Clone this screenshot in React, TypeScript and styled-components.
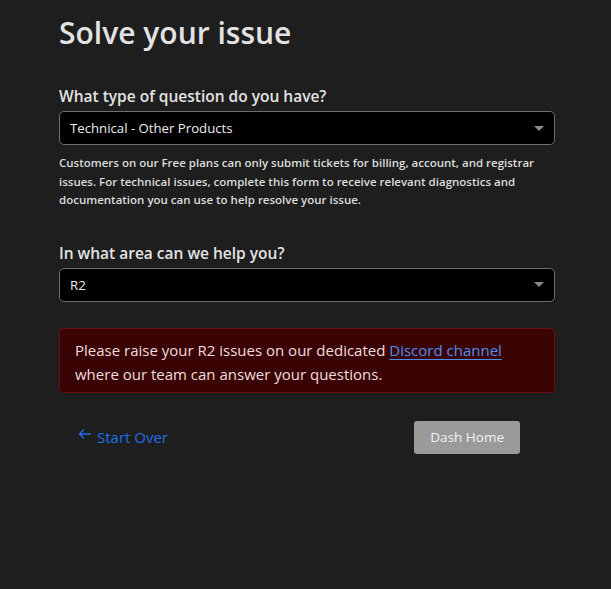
import styled, { createGlobalStyle } from 'styled-components';

const GlobalStyle = createGlobalStyle`
  html, body {
    margin: 0;
    padding: 0;
    background: #1e1e1e;
  }
  body {
    font-family: "Open Sans", "Noto Sans", sans-serif;
    color: #e6e6e6;
  }
`;

const Page = styled.div`
  width: 496px;
  padding: 13px 0 0 59px;
  display: flex;
  flex-direction: column;
`;

const Title = styled.h1`
  margin: 0 0 33px;
  font-size: 30px;
  font-weight: 600;
  line-height: 40px;
  color: #e3e3e3;
`;

const Field = styled.div<{ $gap?: number }>`
  display: flex;
  flex-direction: column;
  margin-bottom: ${p => p.$gap ?? 0}px;
`;

const Label = styled.label`
  font-size: 15.5px;
  font-weight: 600;
  line-height: 20px;
  margin-bottom: 5px;
  color: #e3e3e3;
`;

const SelectBox = styled.div`
  height: 34px;
  box-sizing: border-box;
  border: 1px solid #6e6e6e;
  border-radius: 5px;
  background: #000;
  display: flex;
  align-items: center;
  padding: 0 10px;
  font-size: 13.2px;
  color: #ededed;
`;

const Caret = styled.span`
  margin-left: auto;
  width: 0;
  height: 0;
  border-left: 5px solid transparent;
  border-right: 5px solid transparent;
  border-top: 5px solid #8a8a8a;
`;

const Help = styled.p`
  margin: 9px 0 0;
  font-size: 11.5px;
  font-weight: 600;
  line-height: 18.5px;
  color: #dcdcdc;
`;

const Alert = styled.div`
  box-sizing: border-box;
  border: 1px solid #6a1010;
  border-radius: 4px;
  background: #3b0404;
  padding: 9px 15px 6px;
  font-size: 15px;
  line-height: 24px;
  color: #f0dcdc;
`;

const Link = styled.a`
  color: #4d8ef2;
  text-decoration: underline;
  text-underline-offset: 3px;
`;

const Actions = styled.div`
  display: flex;
  align-items: center;
  justify-content: space-between;
  padding: 28px 35px 0 19px;
`;

const BackLink = styled.a`
  display: flex;
  align-items: center;
  gap: 5px;
  color: #1f6fe8;
  font-size: 15px;
  text-decoration: none;
  svg {
    margin-top: -6px;
  }
`;

const Button = styled.button`
  height: 33px;
  padding: 0 16px;
  border: none;
  border-radius: 3px;
  background: #9a9a9a;
  color: #f2f2f2;
  font-family: inherit;
  font-size: 13.5px;
`;

export default function App() {
  return (
    <>
      <GlobalStyle />
      <Page>
        <Title>Solve your issue</Title>
        <Field $gap={33}>
          <Label>What type of question do you have?</Label>
          <SelectBox>
            Technical - Other Products
            <Caret />
          </SelectBox>
          <Help>
            Customers on our Free plans can only submit tickets for billing, account, and registrar
            issues. For technical issues, complete this form to receive relevant diagnostics and
            documentation you can use to help resolve your issue.
          </Help>
        </Field>
        <Field $gap={26}>
          <Label>In what area can we help you?</Label>
          <SelectBox>
            R2
            <Caret />
          </SelectBox>
        </Field>
        <Alert>
          Please raise your R2 issues on our dedicated <Link href="#">Discord channel</Link>
          <br />
          where our team can answer your questions.
        </Alert>
        <Actions>
          <BackLink href="#">
            <svg width="14" height="12" viewBox="0 0 14 12" fill="none" stroke="currentColor" strokeWidth="1.3">
              <path d="M13 6H1.5M6 1.5L1.5 6 6 10.5" />
            </svg>
            Start Over
          </BackLink>
          <Button>Dash Home</Button>
        </Actions>
      </Page>
    </>
  );
}
